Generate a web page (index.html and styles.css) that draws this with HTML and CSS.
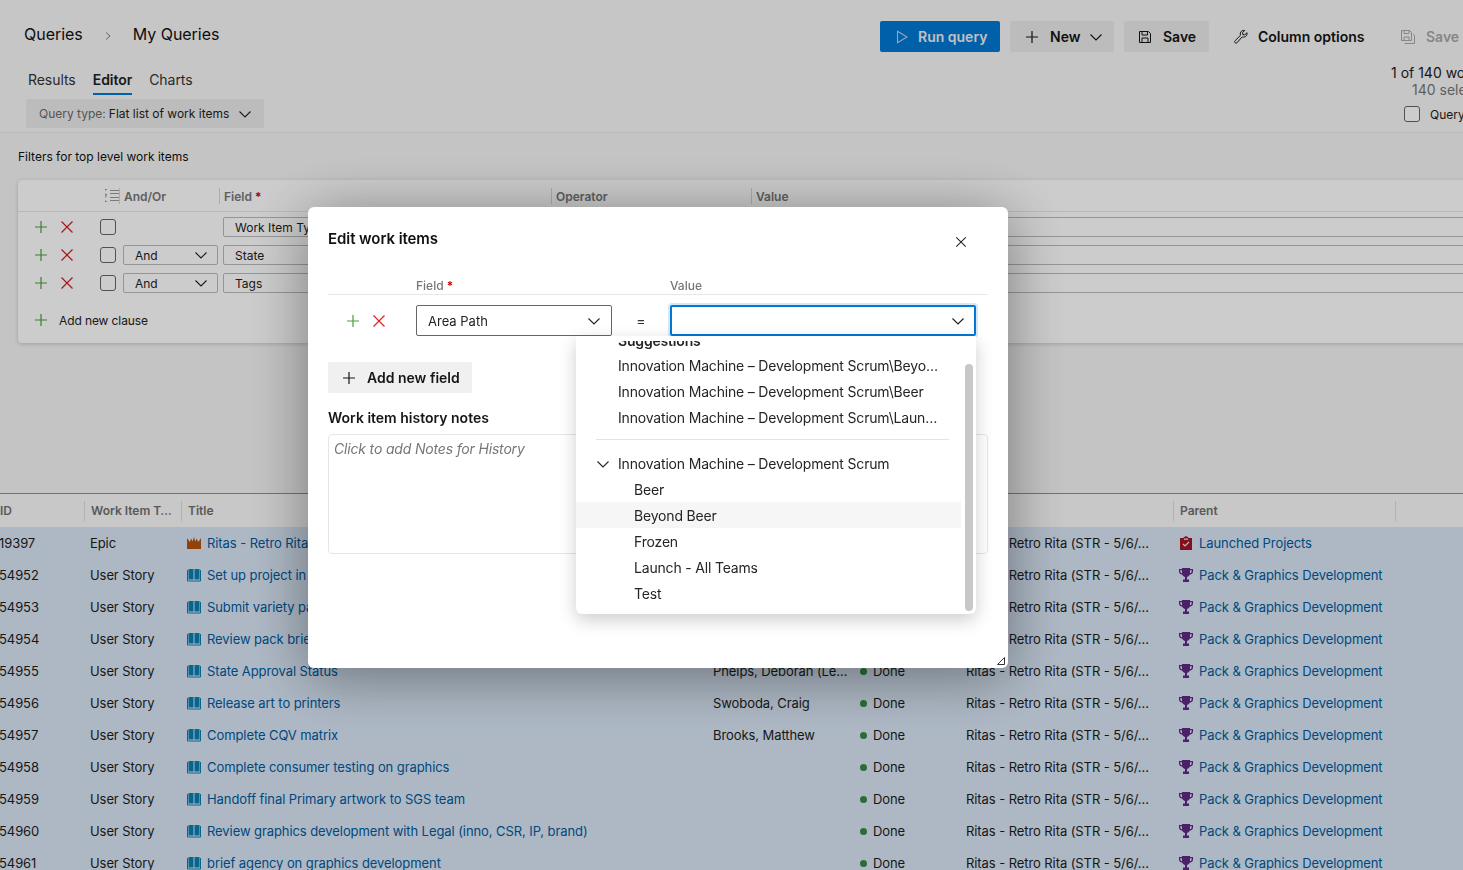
FILE: index.html
```html
<!DOCTYPE html>
<html lang="en">
<head>
<meta charset="utf-8">
<title>Edit work items</title>
<link rel="stylesheet" href="styles.css">
</head>
<body>
<svg class="defs" width="0" height="0" aria-hidden="true">
  <symbol id="chev" viewBox="0 0 14 14"><path d="M1.500 4.500 7 10l5.500-5.500" fill="none" stroke="currentColor" stroke-width="1.100"/></symbol>
  <symbol id="plus" viewBox="0 0 14 14"><path d="M7 1v12M1 7h12" fill="none" stroke="currentColor" stroke-width="1.200"/></symbol>
  <symbol id="cross" viewBox="0 0 14 14"><path d="M1.500 1.500l11 11M12.500 1.500l-11 11" fill="none" stroke="currentColor" stroke-width="1.200"/></symbol>
  <symbol id="book" viewBox="0 0 14 13"><path d="M1.500 0h5v10.500h-5zM7.500 0h5v10.500h-5z" fill="#0b7fb0"/><path d="M.5 1v11h13V1" fill="none" stroke="#0b7fb0"/></symbol>
  <symbol id="crown" viewBox="0 0 14 12"><path d="M0 1l2.800 4L4.200 1.500 5.600 4.500 7 0l1.400 4.500L9.800 1.500 11.200 5 14 1v11H0z" fill="#b4530b"/></symbol>
  <symbol id="trophy" viewBox="0 0 14 14"><path d="M3 0h8v1h3v2.500c0 1.800-1.300 3-3.300 3.200C10 8 9 8.800 8 9v2.500h2V14H4v-2.500h2V9C5 8.800 4 8 3.300 6.700 1.300 6.500 0 5.300 0 3.500V1h3zM1.300 2.300v1.200c0 .9.600 1.500 1.700 1.700V2.300zm11.400 0H11v2.900c1.100-.2 1.700-.8 1.700-1.700z" fill="#5e2a82"/></symbol>
  <symbol id="clip" viewBox="0 0 12 14"><path d="M0 2h3.500V1.500L6 0l2.500 1.500V2H12v12H0z" fill="#a31526"/><path d="M3 8l2 2 4-4M4 3.200h4" fill="none" stroke="#e8e8e8" stroke-width="1.200"/></symbol>
  <symbol id="save" viewBox="0 0 14 14"><path d="M1.500 1.500h9l2 2v9h-11zM4 1.500v3.500h5.500v-3.500M4 12.500V8h6v4.500" fill="none" stroke="currentColor"/></symbol>
  <symbol id="saveas" viewBox="0 0 14 14"><path d="M.5.5h8l2 2v8H.5zM3 .5v3h5v-3M3 10.500V7h5v3.500M12 4l1.500 1.500v8h-10" fill="none" stroke="currentColor"/></symbol>
</svg>

<div class="page">
  <header class="head">
    <div class="topbar">
      <nav class="crumbs">
        <span>Queries</span>
        <svg class="crumb-sep" width="8" height="10" viewBox="0 0 8 10"><path d="M2 1.500 6 5 2 8.500" fill="none" stroke="#808080"/></svg>
        <span>My Queries</span>
      </nav>
      <div class="tools">
        <button class="btn btn-primary">
          <svg width="14" height="14" viewBox="0 0 14 14"><path d="M2.500 1.200v11.600L12 7z" fill="none" stroke="#b9cfe6" stroke-width="1.100"/></svg>
          <span>Run query</span>
        </button>
        <button class="btn btn-new">
          <svg width="14" height="14"><use href="#plus"/></svg>
          <span>New</span>
          <svg width="14" height="14"><use href="#chev"/></svg>
        </button>
        <button class="btn btn-save">
          <svg width="14" height="14"><use href="#save"/></svg>
          <span>Save</span>
        </button>
        <button class="btn btn-flat btn-cols">
          <svg width="16" height="16" viewBox="0 0 16 16"><path d="M2.200 13.800c-.7-.7-.7-1.500 0-2.200l5.300-5.300c-.5-1.700-.1-3.100.9-4 .9-.8 2.100-1.100 3.300-.8L9.600 3.600l.2 2 2 .2 2.200-2.100c.3 1.200 0 2.400-.8 3.300-.9 1-2.300 1.400-4 .9l-5.300 5.900c-.6.600-1.100.6-1.700 0z" fill="none" stroke="currentColor" stroke-width="1"/></svg>
          <span>Column options</span>
        </button>
        <button class="btn btn-flat btn-off">
          <svg width="14" height="14"><use href="#saveas"/></svg>
          <span>Save items</span>
        </button>
      </div>
    </div>
    <div class="subbar">
      <div class="sub-left">
        <div class="tabs">
          <span class="tab">Results</span>
          <span class="tab tab-on">Editor</span>
          <span class="tab">Charts</span>
        </div>
        <div class="qtype">
          <span class="qtype-key">Query type:</span>
          <span>Flat list of work items</span>
          <svg width="14" height="14"><use href="#chev"/></svg>
        </div>
      </div>
      <div class="counts">
        <div class="count-a">1 of 140 work items</div>
        <div class="count-b">140 selected</div>
        <label class="count-c"><span class="check"></span><span>Query across projects</span></label>
      </div>
    </div>
  </header>

  <section class="filters">
    <h2 class="filters-title">Filters for top level work items</h2>
    <div class="panel">
      <div class="clause-head">
        <span class="ch-group">
          <svg width="14" height="13" viewBox="0 0 14 13"><path d="M5 1.500h9M5 4.500h9M5 8.500h9M5 11.500h9M0 2V.5h2M0 9V7h2M0 11v1.500h2M0 4v1.500h2" fill="none" stroke="#9a9a9a"/></svg>
        </span>
        <span class="ch-cell ch-andor">And/Or</span>
        <span class="ch-cell">Field <b class="req">*</b></span>
        <span class="ch-cell">Operator</span>
        <span class="ch-cell">Value</span>
      </div>
      <div class="clause">
        <svg class="ic-add" width="14" height="14"><use href="#plus"/></svg>
        <svg class="ic-del" width="14" height="14"><use href="#cross"/></svg>
        <span class="check"></span>
        <span></span>
        <span class="inp">Work Item Type</span>
        <span class="inp">=</span>
        <span class="inp">User Story</span>
      </div>
      <div class="clause">
        <svg class="ic-add" width="14" height="14"><use href="#plus"/></svg>
        <svg class="ic-del" width="14" height="14"><use href="#cross"/></svg>
        <span class="check"></span>
        <span class="inp inp-sel">And<svg width="14" height="14"><use href="#chev"/></svg></span>
        <span class="inp">State</span>
        <span class="inp">=</span>
        <span class="inp">Done</span>
      </div>
      <div class="clause">
        <svg class="ic-add" width="14" height="14"><use href="#plus"/></svg>
        <svg class="ic-del" width="14" height="14"><use href="#cross"/></svg>
        <span class="check"></span>
        <span class="inp inp-sel">And<svg width="14" height="14"><use href="#chev"/></svg></span>
        <span class="inp">Tags</span>
        <span class="inp">Contains</span>
        <span class="inp">Retro</span>
      </div>
      <div class="add-clause">
        <svg class="ic-add" width="14" height="14"><use href="#plus"/></svg>
        <span>Add new clause</span>
      </div>
    </div>
  </section>

  <section class="results">
    <div class="grid grid-head">
      <span class="hc hc-id">ID</span>
      <span class="hc">Work Item T…</span>
      <span class="hc">Title</span>
      <span class="hc hc-plain"></span>
      <span class="hc hc-plain"></span>
      <span class="hc hc-plain"></span>
      <span class="hc">Parent</span>
      <span class="hc"></span>
    </div>

    <div class="grid row">
      <span class="c-id">19397</span><span class="c">Epic</span>
      <span class="c c-title"><svg width="14" height="12"><use href="#crown"/></svg><a>Ritas - Retro Rita</a></span>
      <span class="c c-who"></span>
      <span class="c c-state"><i class="dot"></i>Done</span>
      <span class="c">Ritas - Retro Rita (STR - 5/6/…</span>
      <span class="c c-title"><svg class="ic-parent" width="12" height="14"><use href="#clip"/></svg><a>Launched Projects</a></span>
    </div>
    <div class="grid row">
      <span class="c-id">54952</span><span class="c">User Story</span>
      <span class="c c-title"><svg width="14" height="13"><use href="#book"/></svg><a>Set up project in</a></span>
      <span class="c c-who"></span>
      <span class="c c-state"><i class="dot"></i>Done</span>
      <span class="c">Ritas - Retro Rita (STR - 5/6/…</span>
      <span class="c c-title"><svg width="14" height="14"><use href="#trophy"/></svg><a>Pack &amp; Graphics Development</a></span>
    </div>
    <div class="grid row">
      <span class="c-id">54953</span><span class="c">User Story</span>
      <span class="c c-title"><svg width="14" height="13"><use href="#book"/></svg><a>Submit variety pack</a></span>
      <span class="c c-who"></span>
      <span class="c c-state"><i class="dot"></i>Done</span>
      <span class="c">Ritas - Retro Rita (STR - 5/6/…</span>
      <span class="c c-title"><svg width="14" height="14"><use href="#trophy"/></svg><a>Pack &amp; Graphics Development</a></span>
    </div>
    <div class="grid row">
      <span class="c-id">54954</span><span class="c">User Story</span>
      <span class="c c-title"><svg width="14" height="13"><use href="#book"/></svg><a>Review pack brief</a></span>
      <span class="c c-who"></span>
      <span class="c c-state"><i class="dot"></i>Done</span>
      <span class="c">Ritas - Retro Rita (STR - 5/6/…</span>
      <span class="c c-title"><svg width="14" height="14"><use href="#trophy"/></svg><a>Pack &amp; Graphics Development</a></span>
    </div>
    <div class="grid row">
      <span class="c-id">54955</span><span class="c">User Story</span>
      <span class="c c-title"><svg width="14" height="13"><use href="#book"/></svg><a>State Approval Status</a></span>
      <span class="c c-who">Phelps, Deborah (Le…</span>
      <span class="c c-state"><i class="dot"></i>Done</span>
      <span class="c">Ritas - Retro Rita (STR - 5/6/…</span>
      <span class="c c-title"><svg width="14" height="14"><use href="#trophy"/></svg><a>Pack &amp; Graphics Development</a></span>
    </div>
    <div class="grid row">
      <span class="c-id">54956</span><span class="c">User Story</span>
      <span class="c c-title"><svg width="14" height="13"><use href="#book"/></svg><a>Release art to printers</a></span>
      <span class="c c-who">Swoboda, Craig</span>
      <span class="c c-state"><i class="dot"></i>Done</span>
      <span class="c">Ritas - Retro Rita (STR - 5/6/…</span>
      <span class="c c-title"><svg width="14" height="14"><use href="#trophy"/></svg><a>Pack &amp; Graphics Development</a></span>
    </div>
    <div class="grid row">
      <span class="c-id">54957</span><span class="c">User Story</span>
      <span class="c c-title"><svg width="14" height="13"><use href="#book"/></svg><a>Complete CQV matrix</a></span>
      <span class="c c-who">Brooks, Matthew</span>
      <span class="c c-state"><i class="dot"></i>Done</span>
      <span class="c">Ritas - Retro Rita (STR - 5/6/…</span>
      <span class="c c-title"><svg width="14" height="14"><use href="#trophy"/></svg><a>Pack &amp; Graphics Development</a></span>
    </div>
    <div class="grid row">
      <span class="c-id">54958</span><span class="c">User Story</span>
      <span class="c c-title"><svg width="14" height="13"><use href="#book"/></svg><a>Complete consumer testing on graphics</a></span>
      <span class="c c-who"></span>
      <span class="c c-state"><i class="dot"></i>Done</span>
      <span class="c">Ritas - Retro Rita (STR - 5/6/…</span>
      <span class="c c-title"><svg width="14" height="14"><use href="#trophy"/></svg><a>Pack &amp; Graphics Development</a></span>
    </div>
    <div class="grid row">
      <span class="c-id">54959</span><span class="c">User Story</span>
      <span class="c c-title"><svg width="14" height="13"><use href="#book"/></svg><a>Handoff final Primary artwork to SGS team</a></span>
      <span class="c c-who"></span>
      <span class="c c-state"><i class="dot"></i>Done</span>
      <span class="c">Ritas - Retro Rita (STR - 5/6/…</span>
      <span class="c c-title"><svg width="14" height="14"><use href="#trophy"/></svg><a>Pack &amp; Graphics Development</a></span>
    </div>
    <div class="grid row">
      <span class="c-id">54960</span><span class="c">User Story</span>
      <span class="c c-title"><svg width="14" height="13"><use href="#book"/></svg><a>Review graphics development with Legal (inno, CSR, IP, brand)</a></span>
      <span class="c c-who"></span>
      <span class="c c-state"><i class="dot"></i>Done</span>
      <span class="c">Ritas - Retro Rita (STR - 5/6/…</span>
      <span class="c c-title"><svg width="14" height="14"><use href="#trophy"/></svg><a>Pack &amp; Graphics Development</a></span>
    </div>
    <div class="grid row">
      <span class="c-id">54961</span><span class="c">User Story</span>
      <span class="c c-title"><svg width="14" height="13"><use href="#book"/></svg><a>brief agency on graphics development</a></span>
      <span class="c c-who"></span>
      <span class="c c-state"><i class="dot"></i>Done</span>
      <span class="c">Ritas - Retro Rita (STR - 5/6/…</span>
      <span class="c c-title"><svg width="14" height="14"><use href="#trophy"/></svg><a>Pack &amp; Graphics Development</a></span>
    </div>
  </section>
</div>

<div class="scrim"></div>

<div class="modal" role="dialog">
  <div class="modal-top">
    <h1 class="modal-title">Edit work items</h1>
    <svg class="modal-close" width="12" height="12" viewBox="0 0 14 14"><use href="#cross"/></svg>
  </div>
  <div class="mf-head">
    <span class="mf-field">Field <b class="req">*</b></span>
    <span>Value</span>
  </div>
  <div class="mf-row">
    <svg class="m-add" width="14" height="14"><use href="#plus"/></svg>
    <svg class="m-del" width="14" height="14"><use href="#cross"/></svg>
    <div class="msel msel-field"><span>Area Path</span><svg width="14" height="14"><use href="#chev"/></svg></div>
    <span class="m-eq">=</span>
    <div class="msel msel-value"><svg width="14" height="14"><use href="#chev"/></svg></div>
  </div>
  <button class="add-field">
    <svg width="14" height="14"><use href="#plus"/></svg>
    <span>Add new field</span>
  </button>
  <h3 class="notes-label">Work item history notes</h3>
  <div class="notes">Click to add Notes for History</div>
  <svg class="resize" width="8" height="8" viewBox="0 0 8 8"><path d="M7.500.5v7h-7z" fill="none" stroke="#333"/></svg>

  <div class="drop">
    <div class="drop-clip">
      <div class="drop-list">
        <div class="d-head">Suggestions</div>
        <div class="d-item">Innovation Machine – Development Scrum\Beyo…</div>
        <div class="d-item">Innovation Machine – Development Scrum\Beer</div>
        <div class="d-item">Innovation Machine – Development Scrum\Laun…</div>
        <div class="d-sep"></div>
        <div class="d-item d-root"><svg width="14" height="14"><use href="#chev"/></svg><span>Innovation Machine – Development Scrum</span></div>
        <div class="d-item d-sub">Beer</div>
        <div class="d-item d-sub d-hover">Beyond Beer</div>
        <div class="d-item d-sub">Frozen</div>
        <div class="d-item d-sub">Launch - All Teams</div>
        <div class="d-item d-sub">Test</div>
      </div>
    </div>
    <div class="d-track"><div class="d-thumb"></div></div>
  </div>
</div>
</body>
</html>
```

FILE: styles.css
```css
* { box-sizing: border-box; }
html, body { margin: 0; height: 100%; overflow: hidden; }
body {
  font-family: "Inter", "Liberation Sans", sans-serif;
  font-size: 13px;
  color: #1c1c1c;
  background: #f5f5f5;
}
svg { display: block; flex: none; }
.defs { position: absolute; }
button { font: inherit; border: 0; margin: 0; color: inherit; }
h1, h2, h3 { margin: 0; }
.req { color: #c80000; font-weight: 600; }

.page { width: 1600px; height: 870px; overflow: hidden; display: flex; flex-direction: column; }

/* header */
.head { flex: none; background: #f8f8f8; border-bottom: 1px solid #ececec; height: 133px; }
.topbar { display: flex; height: 62px; padding: 21px 0 0 24px; }
.crumbs { width: 856px; height: 26px; display: flex; align-items: center; font-size: 16px; font-weight: 400; letter-spacing: -.03px; color: #111; }
.crumb-sep { margin: 3px 21px 0 21px; }
.tools { display: flex; gap: 10px; }
.btn { display: flex; align-items: center; height: 31px; border-radius: 2px; font-size: 14px; font-weight: 600; padding: 0 14px; background: #ececec; color: #141414; white-space: nowrap; }
.btn-primary { width: 120px; background: #0078d4; color: #f1f1f1; gap: 9px; padding: 0 0 0 15px; }
.btn-new { width: 104px; gap: 11px; padding-left: 15px; }
.btn-new svg:last-child { margin-left: -2px; }
.btn-save { width: 85px; gap: 11px; padding-left: 14px; }
.btn-flat { background: none; }
.btn-cols { margin-left: 14px; padding: 0; gap: 9px; width: 132px; }
.btn-off { margin-left: 26px; padding: 0; gap: 11px; color: #a8a8a8; font-weight: 600; }

.subbar { display: flex; }
.sub-left { width: 1391px; padding-left: 26px; }
.tabs { display: flex; gap: 17px; padding-left: 2px; height: 37px; font-size: 14px; color: #333; align-items: flex-start; letter-spacing: -.05px; }
.tab { height: 33px; line-height: 36px; border-bottom: 2px solid transparent; }
.tab-on { font-weight: 600; color: #222; border-bottom-color: #0078d4; }
.qtype { display: flex; align-items: center; width: 238px; height: 29px; background: #ececec; border-radius: 2px; padding-left: 13px; font-size: 12px; color: #222; gap: 3px; }
.qtype-key { color: #6b6b6b; }
.qtype svg { margin-left: 6px; }
.counts { font-size: 14px; line-height: 17px; padding-top: 2px; white-space: nowrap; }
.count-b { color: #777; padding-left: 21px; }
.count-c { display: flex; align-items: center; gap: 10px; padding-left: 13px; margin-top: 8px; font-size: 12px; height: 16px; }

.check { display: block; width: 16px; height: 16px; border: 1px solid #666; border-radius: 3px; background: #fff; }

/* filters */
.filters { flex: none; height: 361px; padding: 15px 0 0 18px; border-bottom: 1px solid #8f8f8f; }
.filters-title { font-size: 12px; font-weight: 400; line-height: 18px; color: #111; margin-bottom: 14px; }
.panel { height: 163px; background: #fff; border-radius: 4px 0 0 4px; box-shadow: 0 1px 4px rgba(0,0,0,.18); }
.clause-head { display: grid; grid-template-columns: 101px 100px 332px 200px 1fr; height: 32px; border-bottom: 1px solid #e8e8e8; align-items: center; font-size: 12px; font-weight: 600; color: #777; }
.ch-group { padding-left: 87px; }
.ch-cell { display: block; height: 16px; line-height: 18px; border-left: 1px solid #d8d8d8; padding-left: 4px; }
.clause { display: grid; grid-template-columns: 26px 40px 23px 100px 332px 200px 1fr; align-items: center; height: 28px; padding-left: 16px; }
.clause-head + .clause { margin-top: 1px; }
.clause .check { justify-self: start; }
.ic-add { color: #4f9b3e; }
.ic-del { color: #d01f1f; }
.inp { display: flex; align-items: center; height: 20px; border: 1px solid #bbb; border-radius: 2px; padding-left: 11px; margin-right: 4px; font-size: 12px; color: #222; white-space: nowrap; overflow: hidden; }
.inp-sel { justify-content: space-between; padding-right: 9px; margin-right: 5px; }
.add-clause { display: flex; align-items: center; gap: 11px; height: 28px; margin-top: 9px; padding-left: 16px; font-size: 12px; letter-spacing: -.1px; color: #222; }

/* results */
.grid { display: grid; grid-template-columns: 84px 97px 525px 147px 107px 213px 222px 1fr; }
.results { flex: none; }
.grid-head { height: 33px; background: #fafafa; align-items: center; font-size: 12px; font-weight: 600; color: #707070; }
.hc { height: 20px; line-height: 20px; padding-left: 6px; border-left: 1px solid #dcdcdc; white-space: nowrap; }
.hc-id { border-left: 0; padding-left: 0; }
.hc-plain { border-left: 0; }
.row { height: 32px; align-items: center; background: #d9e7f6; white-space: nowrap; letter-spacing: -.08px; }
.c-id { margin-left: -1px; }
.c { padding-left: 6px; display: flex; align-items: center; }
.c-title svg { margin-right: 6px; }
.c-title a { color: #005a9e; }
.c-title .ic-parent { margin-left: 1px; margin-right: 7px; }
.c-who { padding-left: 7px; }
.c-state { gap: 6px; padding-left: 7px; }
.dot { display: block; width: 7px; height: 7px; border-radius: 50%; background: #338a3f; }

/* overlay */
.scrim { position: fixed; inset: 0; background: rgba(0,0,0,.2); }

/* modal */
.modal { position: fixed; left: 308px; top: 207px; width: 700px; height: 461px; background: #fff; border-radius: 6px; box-shadow: 0 8px 60px rgba(0,0,0,.4); padding: 0 20px; }
.modal-top { display: flex; justify-content: space-between; padding-top: 23px; height: 69px; }
.modal-title { font-size: 15px; font-weight: 600; line-height: 17px; letter-spacing: -.08px; color: #111; }
.modal-close { margin: 6px 21px 0 0; color: #222; }
.mf-head { display: flex; height: 19px; line-height: 20px; border-bottom: 1px solid #e8e8e8; font-size: 12px; font-weight: 500; color: #777; padding-left: 88px; }
.mf-field { width: 254px; }
.mf-row { display: flex; align-items: center; height: 31px; margin-top: 10px; padding-left: 18px; }
.m-add { color: #4f9b3e; }
.m-del { color: #e02020; margin-left: 12px; }
.msel { display: flex; align-items: center; justify-content: space-between; height: 31px; border-radius: 2px; }
.msel-field { width: 196px; margin-left: 30px; padding: 0 10px 0 11px; border: 1px solid #666; color: #222; }
.m-eq { width: 58px; text-align: center; font-size: 14px; color: #333; }
.msel-value { width: 306px; padding: 0 9px; border: 2px solid #0078d4; justify-content: flex-end; box-shadow: 0 0 0 2px #d6e8f8; }
.add-field { display: flex; align-items: center; gap: 11px; width: 144px; height: 31px; margin-top: 26px; background: #f0f0f0; border-radius: 2px; padding: 0 0 0 14px; font-size: 14px; font-weight: 600; color: #161616; }
.notes-label { font-size: 14px; font-weight: 600; line-height: 17px; margin-top: 16px; color: #161616; }
.notes { height: 120px; margin-top: 8px; border: 1px solid #e6e6e6; border-radius: 4px; padding: 5px; line-height: 18px; font-size: 14px; font-style: italic; letter-spacing: -.17px; color: #777; }
.resize { position: absolute; right: 3px; bottom: 3px; }

/* dropdown */
.drop { position: absolute; left: 268px; top: 129px; width: 400px; height: 278px; background: #fff; border-radius: 0 0 6px 6px; box-shadow: 0 6px 18px rgba(0,0,0,.2); overflow: hidden; display: flex; }
.drop-clip { width: 385px; flex: none; margin-top: 5px; overflow: hidden; }
.drop-list { margin-top: -12px; font-size: 14px; letter-spacing: -.18px; color: #252525; }
.d-head { height: 24px; line-height: 24px; padding-left: 42px; font-weight: 600; }
.d-item { height: 26px; line-height: 26px; padding-left: 42px; white-space: nowrap; }
.d-sep { height: 1px; background: #e4e4e4; margin: 8px 12px 11px 20px; }
.d-root { display: flex; align-items: center; height: 25px; padding: 1px 0 0 20px; gap: 8px; }
.d-sub { padding-left: 58px; line-height: 28px; }
.d-hover { background: #f6f6f6; }
.d-track { width: 15px; padding: 28px 3px 3px 4px; }
.d-thumb { width: 8px; height: 247px; border-radius: 4px; background: #c8c8c8; }
```
